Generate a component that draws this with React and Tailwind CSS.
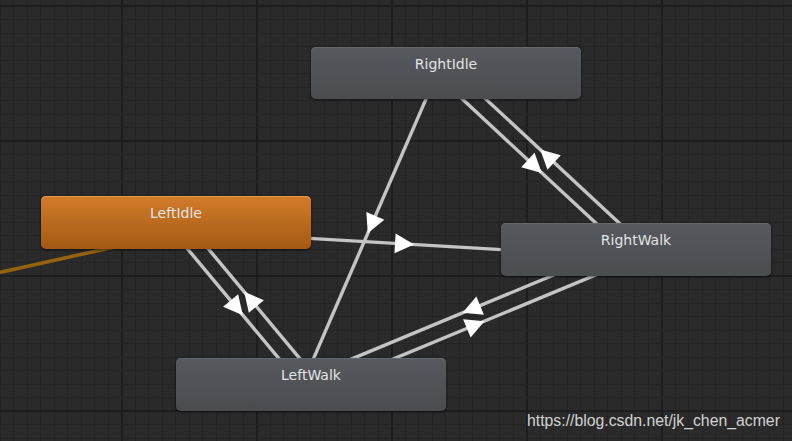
import React from "react";

const NODES = {
  RightIdle: { x: 311, y: 47, w: 270, h: 52 },
  LeftIdle: { x: 41, y: 196, w: 270, h: 53 },
  RightWalk: { x: 501, y: 223, w: 270, h: 53 },
  LeftWalk: { x: 176, y: 358, w: 270, h: 53 },
};

const TRANSITIONS = [
  ["LeftIdle", "RightWalk"],
  ["RightIdle", "LeftWalk"],
  ["LeftIdle", "LeftWalk"],
  ["LeftWalk", "LeftIdle"],
  ["RightIdle", "RightWalk"],
  ["RightWalk", "RightIdle"],
  ["LeftWalk", "RightWalk"],
  ["RightWalk", "LeftWalk"],
];

const center = (n) => [n.x + n.w / 2, n.y + n.h / 2];

function Grid() {
  const rects = [];
  for (let k = 0; k < 62; k++) {
    const x = Math.round(13.5 * k - 0.5);
    const major = k % 10 === 9;
    rects.push(
      <rect key={"v" + k} x={x} y={0} width={major ? 2 : 1} height={441} fill={major ? "#1d1d1d" : "#242424"} />
    );
  }
  for (let k = 0; k < 35; k++) {
    const y = Math.round(5.5 + 13.5 * k);
    const major = k % 10 === 0;
    rects.push(
      <rect key={"h" + k} x={0} y={major ? y - 1 : y} width={792} height={major ? 2 : 1} fill={major ? "#1d1d1d" : "#242424"} />
    );
  }
  return (
    <svg className="absolute inset-0" width="792" height="441">
      {rects}
    </svg>
  );
}

function Transitions() {
  const items = TRANSITIONS.map(([a, b], i) => {
    const [ax, ay] = center(NODES[a]);
    const [bx, by] = center(NODES[b]);
    const len = Math.hypot(bx - ax, by - ay);
    const dx = (bx - ax) / len;
    const dy = (by - ay) / len;
    const off = 8;
    const ox = -dy * off;
    const oy = dx * off;
    const x1 = ax + ox, y1 = ay + oy, x2 = bx + ox, y2 = by + oy;
    const mx = (x1 + x2) / 2, my = (y1 + y2) / 2;
    const tip = [mx + dx * 8.5, my + dy * 8.5];
    const bc = [mx - dx * 10.5, my - dy * 10.5];
    const px = -dy * 9.8, py = dx * 9.8;
    const pts = `${tip[0]},${tip[1]} ${bc[0] + px},${bc[1] + py} ${bc[0] - px},${bc[1] - py}`;
    return (
      <g key={i}>
        <line x1={x1} y1={y1} x2={x2} y2={y2} stroke="#c4c4c4" strokeWidth="3.4" />
        <polygon points={pts} fill="#ffffff" />
      </g>
    );
  });
  return (
    <svg className="absolute inset-0" width="792" height="441">
      <line x1={-20} y1={276.7} x2={176} y2={233.4} stroke="#95620f" strokeWidth="3.6" />
      {items}
    </svg>
  );
}

const labelCls =
  "text-center pt-[8.5px] leading-[17px] text-[14px] text-[#e3e3e3] font-['DejaVu_Sans',sans-serif]";

export default function App() {
  return (
    <div className="relative w-[792px] h-[441px] overflow-hidden bg-[#2a2a2a]">
      <Grid />
      <Transitions />

      <div className="absolute left-[311px] top-[47px] w-[270px] h-[52px] rounded-[5px] bg-[linear-gradient(to_bottom,#56595d,#4a4c50)] shadow-[inset_0_1px_0_#66696d,0_1px_3px_rgba(0,0,0,0.6)]">
        <div className={labelCls}>RightIdle</div>
      </div>

      <div className="absolute left-[41px] top-[196px] w-[270px] h-[53px] rounded-[5px] bg-[linear-gradient(to_bottom,#d27c2a,#a35913)] shadow-[inset_0_1px_0_#e59b52,0_1px_3px_rgba(0,0,0,0.6)]">
        <div className={labelCls}>LeftIdle</div>
      </div>

      <div className="absolute left-[501px] top-[223px] w-[270px] h-[53px] rounded-[5px] bg-[linear-gradient(to_bottom,#56595d,#4a4c50)] shadow-[inset_0_1px_0_#66696d,0_1px_3px_rgba(0,0,0,0.6)]">
        <div className={labelCls}>RightWalk</div>
      </div>

      <div className="absolute left-[176px] top-[358px] w-[270px] h-[53px] rounded-[5px] bg-[linear-gradient(to_bottom,#56595d,#4a4c50)] shadow-[inset_0_1px_0_#66696d,0_1px_3px_rgba(0,0,0,0.6)]">
        <div className={labelCls}>LeftWalk</div>
      </div>

      <div className="absolute left-[527px] top-[412px] whitespace-nowrap text-[15.8px] leading-[18px] text-[#d2d2d2] font-['Liberation_Sans',Arial,sans-serif]">
        https://blog.csdn.net/jk_chen_acmer
      </div>
    </div>
  );
}
